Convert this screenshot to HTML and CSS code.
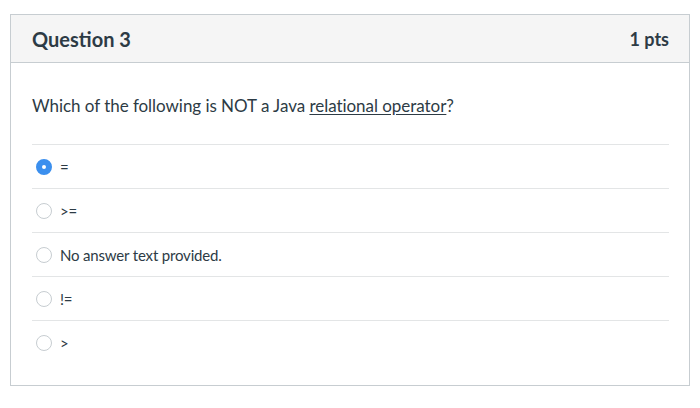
FILE: index.html
```html
<!DOCTYPE html>
<html>
<head>
<meta charset="utf-8">
<link rel="stylesheet" href="styles.css">
</head>
<body>
<div class="question">
  <div class="q-header">
    <span class="q-title">Question 3</span>
    <span class="q-points">1 pts</span>
  </div>
  <div class="q-body">
    <p class="q-text">Which of the following is NOT a Java <u>relational operator</u>?</p>
    <div class="answers">
      <div class="answer"><span class="radio checked"></span><span class="a-text">=</span></div>
      <div class="answer"><span class="radio"></span><span class="a-text">&gt;=</span></div>
      <div class="answer"><span class="radio"></span><span class="a-text">No answer text provided.</span></div>
      <div class="answer"><span class="radio"></span><span class="a-text">!=</span></div>
      <div class="answer"><span class="radio"></span><span class="a-text">&gt;</span></div>
    </div>
  </div>
</div>
</body>
</html>
```

FILE: styles.css
```css
html, body {
  margin: 0;
  padding: 0;
  background: #ffffff;
}
body {
  padding: 14px 10px 0 10px;
  font-family: Lato, "Open Sans", sans-serif;
  color: #2d3b45;
}
.question {
  width: 680px;
  height: 372px;
  box-sizing: border-box;
  border: 1px solid #c7cdd1;
}
.q-header {
  height: 47px;
  background: #f5f5f5;
  border-bottom: 1px solid #c7cdd1;
  display: flex;
  align-items: center;
  justify-content: space-between;
  padding: 0 20px 0 21px;
}
.q-title {
  font-size: 20px;
  font-weight: 700;
}
.q-points {
  font-size: 18px;
  font-weight: 700;
}
.q-body {
  padding: 0 20px 0 21px;
}
.q-text {
  margin: 0;
  padding-top: 33px;
  height: 48px;
  font-size: 17px;
  letter-spacing: -0.04px;
  line-height: 20px;
}
.q-text u {
  text-underline-offset: 2px;
}
.answers {
  border-top: 1px solid #e3e5e6;
}
.answer {
  height: 43px;
  border-bottom: 1px solid #e3e5e6;
  display: flex;
  align-items: center;
  padding-left: 4px;
}
.answer:last-child {
  border-bottom: none;
}
.radio {
  width: 16px;
  height: 16px;
  box-sizing: border-box;
  border: 1px solid #c7cdd1;
  border-radius: 50%;
  background: #fff;
  margin-right: 8px;
  flex: none;
}
.radio.checked {
  background: #ffffff;
  border: 6px solid #3b8fee;
}
.a-text {
  font-size: 15px;
  letter-spacing: -0.17px;
}
```
